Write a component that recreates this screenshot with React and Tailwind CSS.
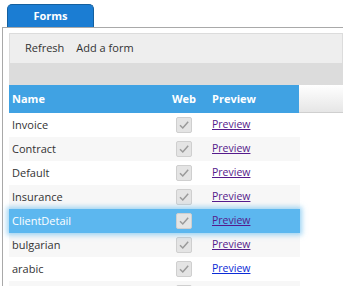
import React from 'react';

const rows = [
  { name: 'Invoice', visited: true },
  { name: 'Contract', visited: true },
  { name: 'Default', visited: true },
  { name: 'Insurance', visited: true },
  { name: 'ClientDetail', visited: true, selected: true },
  { name: 'bulgarian', visited: true },
  { name: 'arabic', visited: false },
  { name: '', visited: false, partial: true },
];

function Check() {
  return (
    <div className="w-[16px] h-[16px] rounded-[2px] border border-[#cfcfcf] bg-[#e4e4e4] flex items-center justify-center">
      <svg width="12" height="12" viewBox="0 0 12 12">
        <path d="M2 6.3 L4.8 9 L10.2 2.8" fill="none" stroke="#9a9a9a" strokeWidth="1.5" />
      </svg>
    </div>
  );
}

export default function App() {
  return (
    <div
      className="w-[343px] h-[286px] overflow-hidden bg-white"
      style={{ fontFamily: '"Open Sans", "Noto Sans", sans-serif' }}
    >
      <div className="h-[27px] pl-[7px] pt-[4px] flex">
        <div className="w-[87px] h-[23px] rounded-t-[5px] bg-[#1b7dd3] border border-b-0 border-[#14609f] flex items-center justify-center text-white font-bold text-[11px]">
          Forms
        </div>
      </div>
      <div className="ml-[2px] border-l border-t border-[#a9a9a9] pl-[6px] pt-[5px]">
        <div className="h-[31px] bg-[#eeeeee] border border-[#dcdcdc] flex items-center gap-[12px] pl-[15px] text-[11px] text-[#333]">
          <span>Refresh</span>
          <span>Add a form</span>
        </div>
        <div className="h-[21px] bg-[#dcdcdc]" />
        <div className="flex h-[28px]">
          <div className="w-[290px] pl-[1px] bg-[#40a2e3] flex items-center text-white font-bold text-[11px]">
            <div className="w-[155px] pl-[2px]">Name</div>
            <div className="w-[38px] text-center">Web</div>
            <div className="pl-[9px]">Preview</div>
          </div>
          <div className="flex-1 bg-gradient-to-b from-white to-[#e6e6e6] border-b border-[#cfcfcf]" />
        </div>
        <div className="w-[291px]">
          {rows.map((r, i) => (
            <div
              key={i}
              className={
                'flex items-center h-[24px] text-[11px] ' +
                (r.selected
                  ? 'bg-[#5cb7ef] text-white shadow-[0_0_5px_2px_rgba(92,183,239,0.6)] relative'
                  : i % 2 === 1
                  ? 'bg-[#f7f7f7] text-[#333]'
                  : 'bg-white text-[#333]')
              }
            >
              <div className="w-[156px] pl-[3px]">{r.name}</div>
              <div className="w-[38px] flex justify-center">
                <Check />
              </div>
              {!r.partial && (
                <div className="pl-[9px] text-[10.5px]">
                  <span className={'underline ' + (r.visited ? 'text-[#551a8b]' : 'text-[#0b2bd6]')}>Preview</span>
                </div>
              )}
            </div>
          ))}
        </div>
      </div>
    </div>
  );
}
